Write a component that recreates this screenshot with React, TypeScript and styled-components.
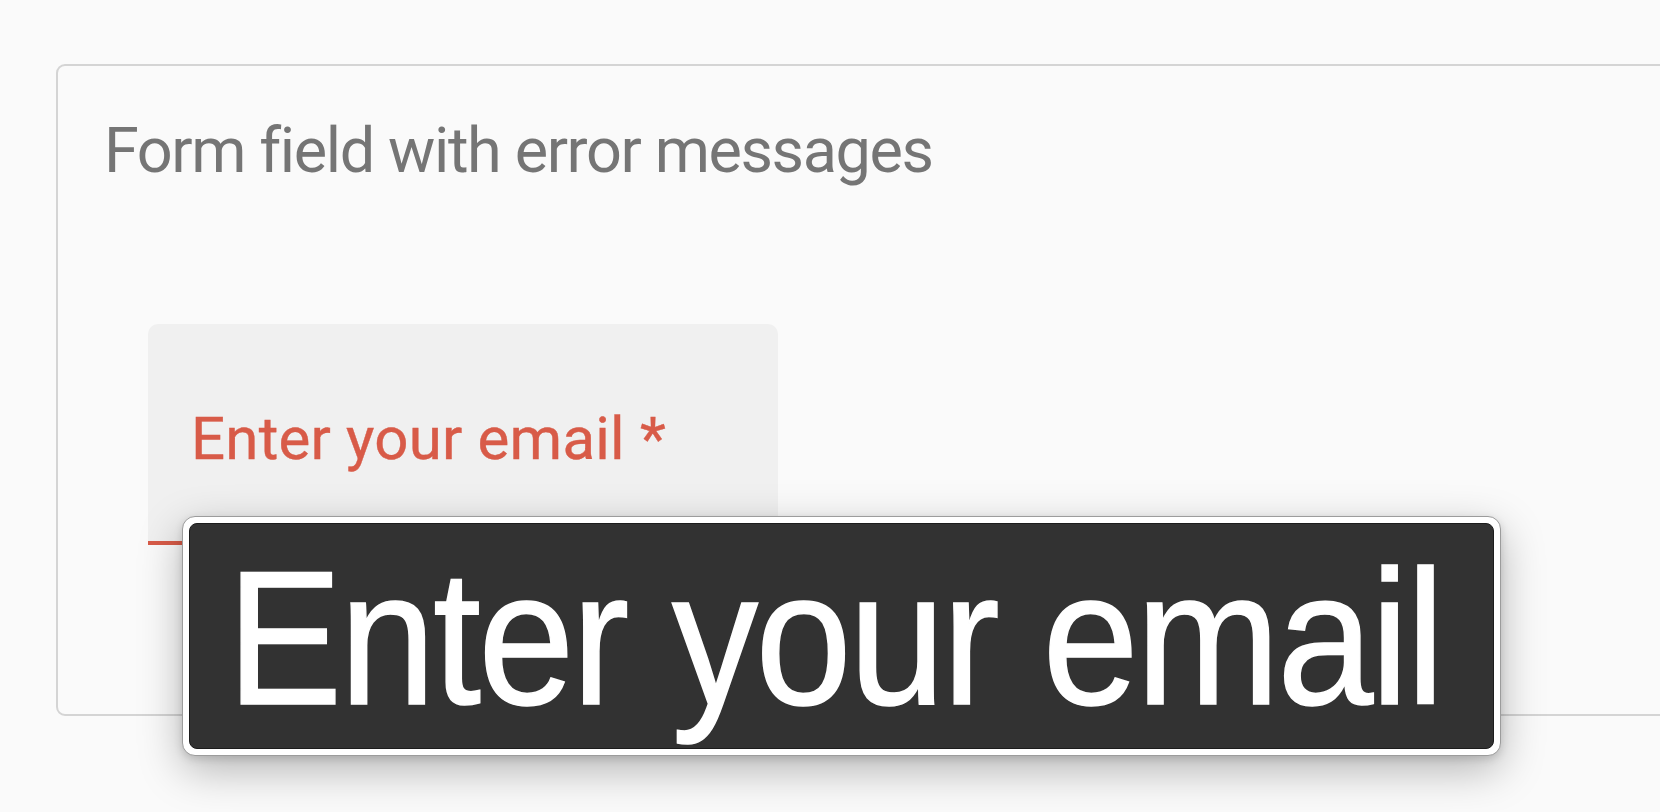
import styled, { createGlobalStyle } from 'styled-components';

const GlobalStyle = createGlobalStyle`
  html, body {
    margin: 0;
    padding: 0;
    background: #fafafa;
    overflow: hidden;
  }
  body {
    width: 1660px;
    height: 812px;
    font-family: Roboto, 'Liberation Sans', sans-serif;
  }
`;

const Page = styled.div`
  position: relative;
  padding: 64px 0 0 56px;
`;

const Card = styled.section`
  box-sizing: border-box;
  width: 1700px;
  height: 652px;
  border: 2px solid #d4d4d4;
  border-radius: 9px;
  padding: 48px 46px;
  background: #fafafa;
`;

const Title = styled.h2`
  margin: 0;
  font-family: Roboto, sans-serif;
  font-weight: 400;
  font-size: 63px;
  line-height: 74px;
  letter-spacing: -1.4px;
  color: #757575;
`;

const FieldRow = styled.div`
  padding: 136px 0 0 44px;
`;

const Field = styled.div`
  box-sizing: border-box;
  width: 630px;
  height: 221px;
  background: #f0f0f0;
  border-radius: 10px 10px 0 0;
  border-bottom: 4px solid #d85b48;
  padding: 80px 0 0 43px;
`;

const Label = styled.label`
  display: block;
  font-family: Roboto, sans-serif;
  font-size: 60px;
  line-height: 69px;
  letter-spacing: 0.2px;
  color: #d85b48;
  -webkit-text-stroke: 0.4px #d85b48;
`;

// native-looking title tooltip laid over the field
const Tooltip = styled.div`
  position: absolute;
  left: 182px;
  top: 516px;
  box-sizing: border-box;
  width: 1319px;
  height: 240px;
  padding: 6px;
  background: #ffffff;
  border: 1px solid #9c9c9c;
  border-radius: 13px;
  box-shadow: 0 14px 44px rgba(0, 0, 0, 0.28), 0 3px 8px rgba(0, 0, 0, 0.14);
`;

const TooltipBody = styled.div`
  box-sizing: border-box;
  height: 100%;
  background: #323232;
  border: 1px solid #1c1c1c;
  border-radius: 8px;
  padding: 18px 0 0 37px;
  white-space: nowrap;
`;

const TooltipText = styled.span`
  display: inline-block;
  transform: scaleX(0.9);
  transform-origin: left center;
  color: #ffffff;
  font-family: 'Liberation Sans', Arial, sans-serif;
  font-size: 192px;
  line-height: 192px;
  letter-spacing: -3px;
  -webkit-text-stroke: 1.5px #ffffff;
`;

export default function App() {
  return (
    <>
      <GlobalStyle />
      <Page>
        <Card>
          <Title>Form field with error messages</Title>
          <FieldRow>
            <Field>
              <Label>Enter your email *</Label>
            </Field>
          </FieldRow>
        </Card>
        <Tooltip>
          <TooltipBody>
            <TooltipText>Enter your email</TooltipText>
          </TooltipBody>
        </Tooltip>
      </Page>
    </>
  );
}
